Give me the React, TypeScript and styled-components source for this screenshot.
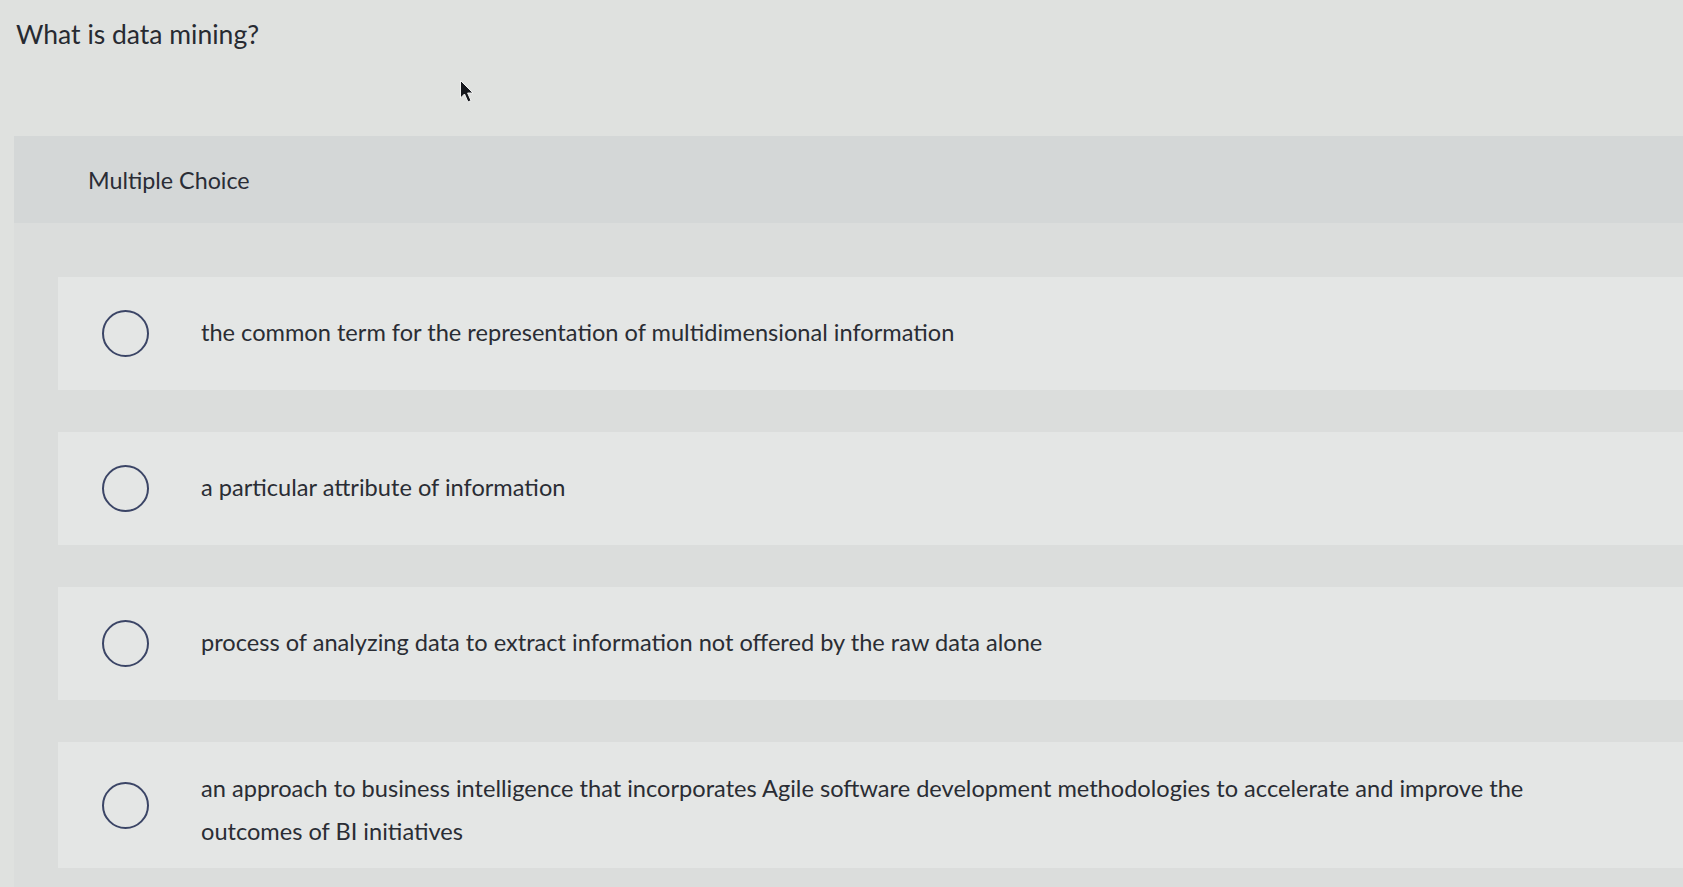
import * as React from "react";
import styled, { createGlobalStyle } from "styled-components";

const GlobalStyle = createGlobalStyle`
  html, body {
    margin: 0;
    padding: 0;
    background: #dfe1df;
  }
  body {
    font-family: Lato, "Open Sans", "Liberation Sans", sans-serif;
    color: #2c2f36;
    overflow: hidden;
  }
`;

const choices = [
  "the common term for the representation of multidimensional information",
  "a particular attribute of information",
  "process of analyzing data to extract information not offered by the raw data alone",
  "an approach to business intelligence that incorporates Agile software development methodologies to accelerate and improve the outcomes of BI initiatives",
];

function Cursor() {
  return (
    <CursorWrap>
      <svg width="16" height="25" viewBox="0 0 16 25">
        <path
          d="M1.5 1.5 L1.5 19 L5.5 15 L9 23 L12 21.6 L8.6 14 L14 14 Z"
          fill="#15171c"
          stroke="#f2f2f2"
          strokeWidth="1"
          strokeLinejoin="round"
        />
      </svg>
    </CursorWrap>
  );
}

export default function App() {
  return (
    <Page>
      <GlobalStyle />
      <Title>What is data mining?</Title>
      <Question>
        <TypeBar>Multiple Choice</TypeBar>
        <Choices>
          {choices.map((text, i) => (
            <Choice key={i} tall={i === 3}>
              <Radio />
              <Label tall={i === 3}>{text}</Label>
            </Choice>
          ))}
        </Choices>
      </Question>
      <Cursor />
    </Page>
  );
}

const Page = styled.div`
  position: relative;
  width: 1683px;
  height: 887px;
  overflow: hidden;
  padding-top: 18px;
  box-sizing: border-box;
`;

const Title = styled.h1`
  margin: 0 0 0 16px;
  font-size: 26.5px;
  line-height: 32px;
  font-weight: 400;
  color: #272a31;
`;

const Question = styled.section`
  margin: 86px 0 0 14px;
  background: #dbdddc;
  display: flex;
  flex-direction: column;
`;

const TypeBar = styled.div`
  height: 87px;
  display: flex;
  align-items: center;
  padding-left: 74px;
  background: #d4d7d7;
  font-size: 23.3px;
  color: #2a2d36;
`;

const Choices = styled.div`
  display: flex;
  flex-direction: column;
  gap: 42px;
  padding: 54px 0 20px 44px;
`;

const Choice = styled.label<{ tall?: boolean }>`
  display: flex;
  align-items: center;
  min-height: ${(p) => (p.tall ? "126px" : "113px")};
  padding-left: 44px;
  background: #e4e6e5;
  box-sizing: border-box;
`;

const Radio = styled.span`
  flex: none;
  width: 47px;
  height: 47px;
  border-radius: 50%;
  border: 2px solid #3b4566;
  box-sizing: border-box;
  margin-right: 52px;
`;

const Label = styled.span<{ tall?: boolean }>`
  font-size: 23.6px;
  line-height: 43px;
  color: #2a2d34;
  max-width: 1420px;
  margin-top: ${(p) => (p.tall ? "9px" : "-3px")};
`;

const CursorWrap = styled.div`
  position: absolute;
  left: 459px;
  top: 79px;
  line-height: 0;
`;
